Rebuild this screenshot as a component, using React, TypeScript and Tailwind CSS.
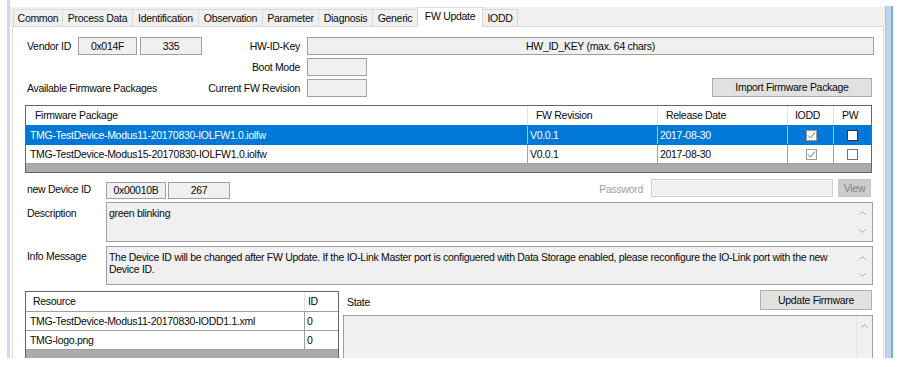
import React from "react";

function Up({ className = "" }: { className?: string }) {
  return (
    <svg width="7" height="4" viewBox="0 0 7 4" className={className}>
      <polyline points="0.5,3.5 3.5,0.5 6.5,3.5" fill="none" stroke="#a8a8a8" strokeWidth="1" />
    </svg>
  );
}
function Down({ className = "" }: { className?: string }) {
  return (
    <svg width="7" height="4" viewBox="0 0 7 4" className={className}>
      <polyline points="0.5,0.5 3.5,3.5 6.5,0.5" fill="none" stroke="#a8a8a8" strokeWidth="1" />
    </svg>
  );
}

function Check({ checked, dark }: { checked: boolean; dark?: boolean }) {
  return (
    <div
      className={
        "w-[11px] h-[11px] bg-white border flex items-center justify-center " +
        (dark ? "border-[#333333]" : checked ? "border-[#9a9a9a]" : "border-[#707070]")
      }
    >
      {checked && (
        <svg width="9" height="9" viewBox="0 0 9 9">
          <polyline points="1,4.5 3.5,7 8,1.5" fill="none" stroke="#6d6d6d" strokeWidth="1" />
        </svg>
      )}
    </div>
  );
}

const tabs: { name: string; w: string; sel?: boolean }[] = [
  { name: "Common", w: "w-[50px]" },
  { name: "Process Data", w: "w-[71px]" },
  { name: "Identification", w: "w-[67px]" },
  { name: "Observation", w: "w-[65px]" },
  { name: "Parameter", w: "w-[57px]" },
  { name: "Diagnosis", w: "w-[55px]" },
  { name: "Generic", w: "w-[46px]" },
  { name: "FW Update", w: "w-[66px]", sel: true },
  { name: "IODD", w: "w-[36px]" },
];

const box = "bg-[#f0f0f0] border border-[#a0a0a0] flex items-center";

export default function App() {
  return (
    <div className="w-[899px] h-[367px] bg-white overflow-hidden font-['Liberation_Sans',Arial,sans-serif] text-[10.5px] tracking-[-0.3px] leading-none text-[#0a0a0a]">
      <div className="flex h-[358px]">
        <div className="w-[7px] shrink-0" />
        <div className="w-[3px] shrink-0 bg-[#c8dbf0]" />
        {/* main column */}
        <div className="w-[875px] shrink-0 flex flex-col">
          <div className="h-[7px] shrink-0" />
          {/* tab strip */}
          <div className="h-[19px] shrink-0 bg-[#f0f0f0] flex items-end pl-[3px]">
            {tabs.map((t) => (
              <div
                key={t.name}
                className={
                  t.w +
                  " -mr-px flex items-center justify-center border border-b-0 border-[#d9d9d9] whitespace-nowrap " +
                  (t.sel ? "h-[20px] -mb-px bg-white relative z-10 pb-[2px]" : "h-[17px] bg-[#f0f0f0]")
                }
              >
                {t.name}
              </div>
            ))}
          </div>
          {/* content panel */}
          <div className="ml-[2px] w-[872px] flex-1 bg-white border-l border-r border-t border-[#d9d9d9] overflow-hidden flex flex-col">
            {/* Row A */}
            <div className="mt-[10px] flex h-[18px] items-center shrink-0">
              <div className="w-[65px] pl-[14px]">Vendor ID</div>
              <div className={box + " w-[59px] h-[18px] justify-center"}>0x014F</div>
              <div className={box + " ml-[3px] w-[62px] h-[18px] justify-center"}>335</div>
              <div className="w-[98px] text-right">HW-ID-Key</div>
              <div className={box + " ml-[7px] w-[567px] h-[18px] justify-center"}>HW_ID_KEY (max. 64 chars)</div>
            </div>
            {/* Row B */}
            <div className="mt-[3px] flex h-[18px] items-center shrink-0">
              <div className="w-[189px]" />
              <div className="w-[98px] text-right">Boot Mode</div>
              <div className={box + " ml-[7px] w-[60px] h-[18px]"} />
            </div>
            {/* Row C */}
            <div className="mt-[3px] flex h-[18px] items-center shrink-0">
              <div className="w-[189px] pl-[14px] whitespace-nowrap">Available Firmware Packages</div>
              <div className="w-[98px] text-right whitespace-nowrap">Current FW Revision</div>
              <div className={box + " ml-[7px] w-[60px] h-[18px]"} />
              <div className="ml-[345px] w-[160px] h-[19px] -mt-[2px] bg-[#e1e1e1] border border-[#adadad] flex items-center justify-center">
                Import Firmware Package
              </div>
            </div>
            {/* Firmware table */}
            <div className="mt-[8px] ml-[12px] w-[847px] border border-[#646464] shrink-0 flex flex-col">
              <div className="h-[19px] flex bg-white">
                <div className="w-[502px] border-r border-[#e3e3e3] pl-[9px] flex items-center">Firmware Package</div>
                <div className="w-[130px] border-r border-[#e3e3e3] pl-[8px] flex items-center">FW Revision</div>
                <div className="w-[130px] border-r border-[#e3e3e3] pl-[8px] flex items-center">Release Date</div>
                <div className="w-[46px] border-r border-[#e3e3e3] pl-[7px] flex items-center">IODD</div>
                <div className="flex-1 pl-[8px] flex items-center">PW</div>
              </div>
              <div className="h-[20px] flex bg-[#0078d7] text-white border-t border-b border-[#0078d7]">
                <div className="w-[502px] border-r border-[#9cc4ea] pl-[4px] flex items-center whitespace-nowrap">TMG-TestDevice-Modus11-20170830-IOLFW1.0.iolfw</div>
                <div className="w-[130px] border-r border-[#9cc4ea] pl-[2px] flex items-center">V0.0.1</div>
                <div className="w-[130px] border-r border-[#9cc4ea] pl-[2px] flex items-center">2017-08-30</div>
                <div className="w-[46px] border-r border-[#9cc4ea] flex items-center justify-center pl-[1px]">
                  <Check checked />
                </div>
                <div className="flex-1 flex items-center justify-center">
                  <Check checked={false} dark />
                </div>
              </div>
              <div className="h-[19px] flex bg-white border-b border-[#a0a0a0]">
                <div className="w-[502px] border-r border-[#a0a0a0] pl-[4px] flex items-center whitespace-nowrap">TMG-TestDevice-Modus15-20170830-IOLFW1.0.iolfw</div>
                <div className="w-[130px] border-r border-[#a0a0a0] pl-[2px] flex items-center">V0.0.1</div>
                <div className="w-[130px] border-r border-[#a0a0a0] pl-[2px] flex items-center">2017-08-30</div>
                <div className="w-[46px] border-r border-[#a0a0a0] flex items-center justify-center pl-[1px]">
                  <Check checked />
                </div>
                <div className="flex-1 flex items-center justify-center">
                  <Check checked={false} />
                </div>
              </div>
              <div className="h-[8px] bg-[#ababab]" />
            </div>
            {/* Row D */}
            <div className="mt-[6px] flex h-[20px] items-start shrink-0">
              <div className="w-[93px] pl-[14px] pt-[5px] whitespace-nowrap">new Device ID</div>
              <div className={box + " mt-[3px] w-[60px] h-[17px] justify-center"}>0x00010B</div>
              <div className={box + " mt-[3px] ml-[2px] w-[62px] h-[17px] justify-center"}>267</div>
              <div className="w-[413px] pt-[5px] text-right text-[#a0a0a0]">Password</div>
              <div className="ml-[8px] w-[182px] h-[18px] bg-[#f0f0f0] border border-[#cfcfcf]" />
              <div className="ml-[5px] w-[33px] h-[18px] bg-[#cccccc] border border-[#c4c4c4] text-[#838383] flex items-center justify-center">
                View
              </div>
            </div>
            {/* Description */}
            <div className="mt-[3px] flex shrink-0">
              <div className="w-[93px] pl-[14px] pt-[6px]">Description</div>
              <div className="w-[767px] h-[40px] bg-[#f0f0f0] border border-[#a0a0a0] flex">
                <div className="flex-1 pl-[2px] pt-[5px]">green blinking</div>
                <div className="w-[16px] flex flex-col items-center justify-between py-[8px] pr-[4px]">
                  <Up />
                  <Down />
                </div>
              </div>
            </div>
            {/* Info Message */}
            <div className="mt-[4px] flex shrink-0">
              <div className="w-[93px] pl-[14px] pt-[5px]">Info Message</div>
              <div className="w-[767px] h-[39px] bg-[#f0f0f0] border border-[#a0a0a0] flex">
                <div className="flex-1 pl-[2px] pt-[4px] leading-[12px] whitespace-nowrap">
                  The Device ID will be changed after FW Update. If the IO-Link Master port is configuered with Data Storage enabled, please reconfigure the IO-Link port with the new
                  <br />
                  Device ID.
                </div>
                <div className="w-[16px] flex flex-col items-center justify-between pt-[9px] pb-[7px] pr-[4px]">
                  <Up />
                  <Down />
                </div>
              </div>
            </div>
            {/* Resource / State */}
            <div className="mt-[6px] flex items-start shrink-0">
              <div className="ml-[12px] w-[314px] border border-[#646464] flex flex-col">
                <div className="h-[19px] flex bg-white">
                  <div className="w-[279px] border-r border-[#e3e3e3] pl-[7px] flex items-center">Resource</div>
                  <div className="flex-1 pl-[3px] flex items-center">ID</div>
                </div>
                <div className="h-[20px] flex bg-white border-t border-b border-[#a0a0a0]">
                  <div className="w-[279px] border-r border-[#a0a0a0] pl-[4px] flex items-center whitespace-nowrap">TMG-TestDevice-Modus11-20170830-IODD1.1.xml</div>
                  <div className="flex-1 pl-[2px] flex items-center">0</div>
                </div>
                <div className="h-[19px] flex bg-white border-b border-[#a0a0a0]">
                  <div className="w-[279px] border-r border-[#a0a0a0] pl-[4px] flex items-center">TMG-logo.png</div>
                  <div className="flex-1 pl-[2px] flex items-center">0</div>
                </div>
                <div className="h-[30px] bg-[#ababab]" />
              </div>
              <div className="ml-[4px] w-[530px] flex flex-col">
                <div className="h-[24px] flex items-start">
                  <div className="pl-[4px] pt-[6px]">State</div>
                  <div className="ml-auto mr-[1px] -mt-[1px] w-[112px] h-[20px] bg-[#e1e1e1] border border-[#adadad] flex items-center justify-center">
                    Update Firmware
                  </div>
                </div>
                <div className="h-[60px] bg-[#f0f0f0] border border-[#a0a0a0] flex">
                  <div className="flex-1" />
                  <div className="w-[16px] border-l border-[#e4e4e4] flex flex-col items-center pt-[8px]">
                    <Up />
                  </div>
                </div>
              </div>
            </div>
          </div>
        </div>
        {/* right blue bar */}
        <div className="mt-[6px] w-[8px] shrink-0 bg-[#bcd6f0] border-l border-[#a6c6e8] border-r-2 border-r-[#7aabdb]" />
      </div>
    </div>
  );
}
